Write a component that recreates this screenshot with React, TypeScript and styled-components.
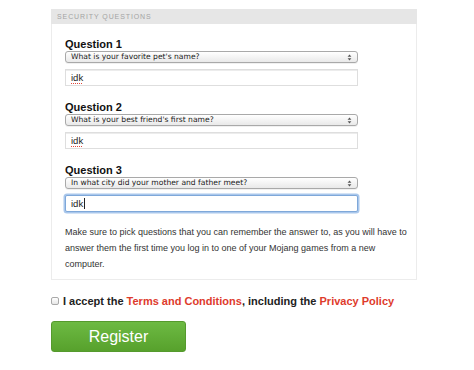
import { createGlobalStyle, styled } from 'styled-components'

const GlobalStyle = createGlobalStyle`
  html, body {
    margin: 0;
    padding: 0;
    background: #fff;
  }
  body {
    font-family: 'Liberation Sans', Arial, sans-serif;
    color: #222;
  }
`

const questions = [
  { label: 'Question 1', prompt: "What is your favorite pet's name?", answer: 'idk', focused: false },
  { label: 'Question 2', prompt: "What is your best friend's first name?", answer: 'idk', focused: false },
  { label: 'Question 3', prompt: 'In what city did your mother and father meet?', answer: 'idk', focused: true },
]

const SelectArrows = () => (
  <Arrows width='5' height='7' viewBox='0 0 5 7'>
    <path d='M0.6 2.8 L2.5 0.6 L4.4 2.8 Z' fill='#555' />
    <path d='M0.6 4.2 L2.5 6.4 L4.4 4.2 Z' fill='#555' />
  </Arrows>
)

export default function App() {
  return (
    <>
      <GlobalStyle />
      <Page>
        <Panel>
          <PanelHeader>Security Questions</PanelHeader>
          <PanelBody>
            {questions.map((q) => (
              <QuestionBlock key={q.label}>
                <Label>{q.label}</Label>
                <SelectBox>
                  <SelectText>{q.prompt}</SelectText>
                  <SelectArrows />
                </SelectBox>
                <Answer $focused={q.focused}>
                  <AnswerText $focused={q.focused}>{q.answer}</AnswerText>
                  {q.focused && <Caret />}
                </Answer>
              </QuestionBlock>
            ))}
            <Note>
              Make sure to pick questions that you can remember the answer to, as you will have to
              answer them the first time you log in to one of your Mojang games from a new
              computer.
            </Note>
          </PanelBody>
        </Panel>
        <Terms>
          <Check />
          <span>
            I accept the <TermLink href='#'>Terms and Conditions</TermLink>, including the{' '}
            <TermLink href='#'>Privacy Policy</TermLink>
          </span>
        </Terms>
        <RegisterBtn type='button'>Register</RegisterBtn>
      </Page>
    </>
  )
}

const Page = styled.div`
  padding: 9px 0 0 51px;
  width: 366px;
`

const Panel = styled.section`
  display: flex;
  flex-direction: column;
`

const PanelHeader = styled.div`
  height: 15px;
  line-height: 16px;
  background: #e6e6e6;
  padding-left: 6px;
  font-size: 7px;
  letter-spacing: 0.9px;
  text-transform: uppercase;
  color: #a4a4a4;
`

const PanelBody = styled.div`
  border: 1px solid #ececec;
  border-top: none;
  padding: 14px 0 7px 13px;
  display: flex;
  flex-direction: column;
`

const QuestionBlock = styled.div`
  display: flex;
  flex-direction: column;
  width: 293px;
  margin-bottom: 15px;

  &:last-of-type {
    margin-bottom: 12px;
  }
`

const Label = styled.div`
  font-size: 11px;
  font-weight: bold;
  line-height: 13px;
  color: #111;
`

const SelectBox = styled.div`
  box-sizing: border-box;
  height: 12px;
  display: flex;
  align-items: center;
  justify-content: space-between;
  padding: 0 5px 0 5px;
  border: 1px solid #a9a9a9;
  border-radius: 3px;
  background: linear-gradient(#ffffff, #e9e9e9);
  box-shadow: 0 1px 0 rgba(0, 0, 0, 0.06);
`

const SelectText = styled.span`
  font-family: 'DejaVu Sans', sans-serif;
  font-size: 7.6px;
  line-height: 10px;
  color: #222;
  white-space: nowrap;
`

const Arrows = styled.svg`
  flex: none;
`

const Answer = styled.div<{ $focused: boolean }>`
  box-sizing: border-box;
  height: 17px;
  margin-top: 6px;
  padding: 0 5px;
  display: flex;
  align-items: center;
  background: #fff;
  border: 1px solid ${(p) => (p.$focused ? '#7fa8d9' : '#dedede')};
  box-shadow: ${(p) => (p.$focused ? '0 0 0 1.5px #a9c7ec' : 'inset 0 1px 0 #ececec')};
  border-radius: ${(p) => (p.$focused ? '2px' : '0')};
`

const AnswerText = styled.span<{ $focused: boolean }>`
  font-size: 9.5px;
  color: #222;
  text-decoration: ${(p) => (p.$focused ? 'none' : 'underline dotted #e2463a')};
  text-decoration-thickness: 1px;
  text-underline-offset: 2px;
`

const Caret = styled.span`
  width: 1px;
  height: 11px;
  margin-left: 0.5px;
  background: #222;
`

const Note = styled.p`
  margin: 0;
  padding-right: 8px;
  font-size: 9px;
  line-height: 16px;
  color: #333;
`

const Terms = styled.label`
  display: flex;
  align-items: center;
  gap: 4px;
  margin-top: 15px;
  height: 12px;
  font-size: 11px;
  font-weight: bold;
  color: #222;
`

const Check = styled.span`
  box-sizing: border-box;
  width: 8px;
  height: 8px;
  border: 1px solid #a9a9a9;
  border-radius: 2px;
  background: linear-gradient(#fff, #e6e6e6);
`

const TermLink = styled.a`
  color: #de3b2c;
  text-decoration: none;
`

const RegisterBtn = styled.button`
  margin-top: 14px;
  width: 135px;
  height: 31px;
  border: 1px solid #559a2d;
  border-radius: 3px;
  background: linear-gradient(#6dba43, #57a12c);
  color: #fff;
  font-family: 'Liberation Sans', Arial, sans-serif;
  font-size: 16px;
  padding: 0;
  cursor: pointer;
`
